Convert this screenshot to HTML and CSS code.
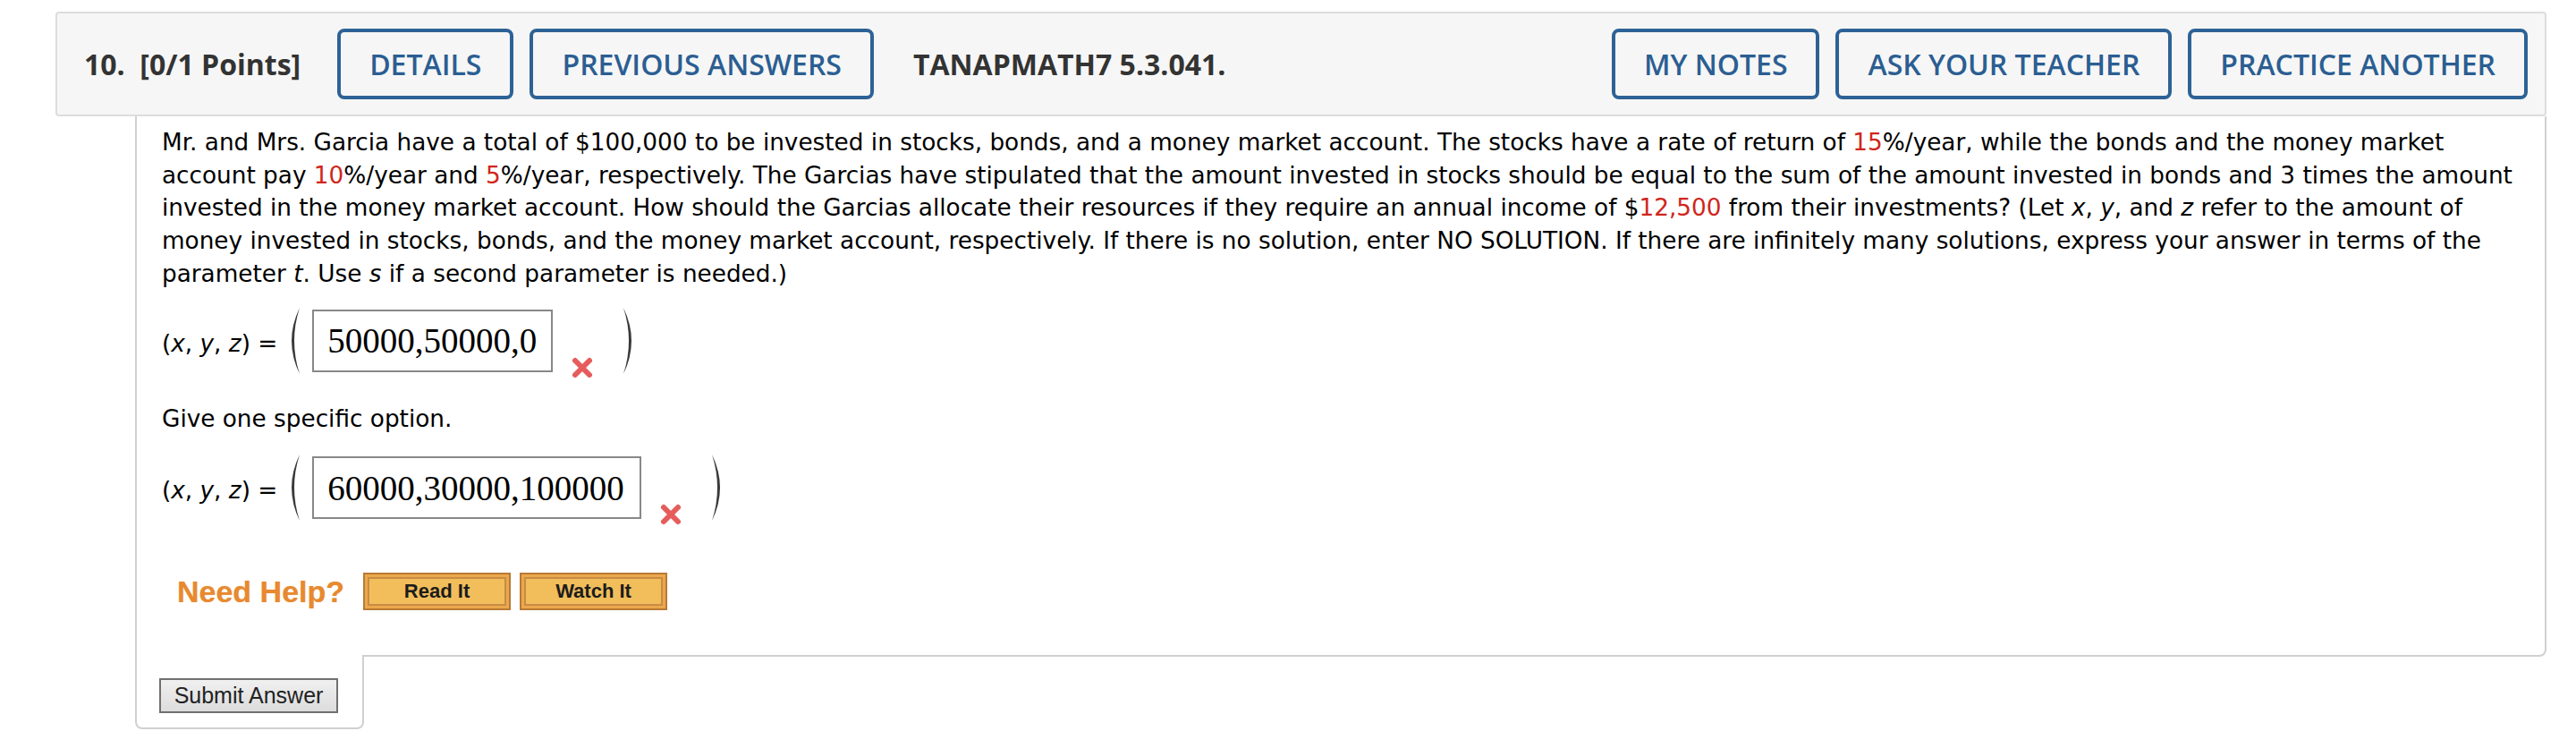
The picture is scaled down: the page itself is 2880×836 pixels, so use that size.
FILE: index.html
```html
<!DOCTYPE html>
<html lang="en">
<head>
<meta charset="utf-8">
<title>Question 10</title>
<link rel="stylesheet" href="styles.css">
</head>
<body>
<div class="question">
  <div class="qhead">
    <span class="qnum">10.&nbsp; [0/1 Points]</span>
    <button class="hbtn">DETAILS</button>
    <button class="hbtn">PREVIOUS ANSWERS</button>
    <span class="qcode">TANAPMATH7 5.3.041.</span>
    <div class="hright">
      <button class="hbtn">MY NOTES</button>
      <button class="hbtn">ASK YOUR TEACHER</button>
      <button class="hbtn">PRACTICE ANOTHER</button>
    </div>
  </div>
  <div class="qbody">
    <p class="prompt">Mr. and Mrs. Garcia have a total of $100,000 to be invested in stocks, bonds, and a money market account. The stocks have a rate of return of <span class="red">15</span>%/year, while the bonds and the money market account pay <span class="red">10</span>%/year and <span class="red">5</span>%/year, respectively. The Garcias have stipulated that the amount invested in stocks should be equal to the sum of the amount invested in bonds and 3 times the amount invested in the money market account. How should the Garcias allocate their resources if they require an annual income of $<span class="red">12,500</span> from their investments? (Let <i>x</i>, <i>y</i>, and <i>z</i> refer to the amount of money invested in stocks, bonds, and the money market account, respectively. If there is no solution, enter NO SOLUTION. If there are infinitely many solutions, express your answer in terms of the parameter <i>t</i>. Use <i>s</i> if a second parameter is needed.)</p>

    <div class="answer">
      <span class="label">(<i>x</i>, <i>y</i>, <i>z</i>) =</span>
      <svg class="paren" width="18" height="76" viewBox="0 0 18 76"><path d="M16 1 Q-2 38 16 75 Q4 38 16 1 Z" fill="#3a3a3a"/></svg>
      <span class="ansbox w1">50000,50000,0</span>
      <svg class="xmark" width="26" height="26" viewBox="0 0 26 26"><path d="M5 5 L21 21 M21 5 L5 21" stroke="#e65c5c" stroke-width="6" stroke-linecap="round"/></svg>
      <svg class="paren close" width="18" height="76" viewBox="0 0 18 76"><path d="M2 1 Q20 38 2 75 Q14 38 2 1 Z" fill="#3a3a3a"/></svg>
    </div>

    <p class="sub">Give one specific option.</p>

    <div class="answer second">
      <span class="label">(<i>x</i>, <i>y</i>, <i>z</i>) =</span>
      <svg class="paren" width="18" height="76" viewBox="0 0 18 76"><path d="M16 1 Q-2 38 16 75 Q4 38 16 1 Z" fill="#3a3a3a"/></svg>
      <span class="ansbox w2">60000,30000,100000</span>
      <svg class="xmark" width="26" height="26" viewBox="0 0 26 26"><path d="M5 5 L21 21 M21 5 L5 21" stroke="#e65c5c" stroke-width="6" stroke-linecap="round"/></svg>
      <svg class="paren close" width="18" height="76" viewBox="0 0 18 76"><path d="M2 1 Q20 38 2 75 Q14 38 2 1 Z" fill="#3a3a3a"/></svg>
    </div>

    <div class="help">
      <span class="needhelp">Need Help?</span>
      <button class="hlp">Read It</button>
      <button class="hlp">Watch It</button>
    </div>
  </div>
  <div class="qtab">
    <button class="submit">Submit Answer</button>
  </div>
</div>
</body>
</html>
```

FILE: styles.css
```css
html, body {
  margin: 0;
  padding: 0;
  background: #ffffff;
}

.question {
  margin-left: 62px;
  width: 2785px;
  padding-top: 13px;
}

.qhead {
  box-sizing: border-box;
  height: 117px;
  display: flex;
  align-items: center;
  background: #f6f6f6;
  border: 2px solid #dddddd;
  border-radius: 4px;
  padding: 0 19px 0 30px;
  font-family: "Open Sans", "Noto Sans", sans-serif;
}

.qnum {
  font-weight: 700;
  font-size: 32px;
  color: #333333;
  margin-right: 41px;
  white-space: nowrap;
}

.qcode {
  font-weight: 700;
  font-size: 32px;
  color: #333333;
  margin-left: 26px;
  white-space: nowrap;
}

.hbtn {
  box-sizing: border-box;
  height: 79px;
  padding: 0 32px;
  background: #f6f6f6;
  border: 4px solid #2d6296;
  border-radius: 8px;
  font-family: "Open Sans", "Noto Sans", sans-serif;
  font-weight: 600;
  font-size: 32px;
  color: #2b5e92;
  white-space: nowrap;
  margin-right: 18px;
}

.hright {
  margin-left: auto;
  display: flex;
}

.hright .hbtn:last-child {
  margin-right: 0;
}

.qbody {
  margin-left: 89px;
  border: 2px solid #d0d0d0;
  border-top: none;
  border-radius: 0 0 8px 0;
  padding: 11px 33px 50px 28px;
  font-family: "DejaVu Sans", Verdana, sans-serif;
  font-size: 26.3px;
  color: #000000;
}

.prompt {
  margin: 0;
  line-height: 36.7px;
}

.red {
  color: #d0261c;
}

.answer {
  display: flex;
  align-items: center;
  margin-top: 18px;
  height: 76px;
}

.answer.second {
  margin-top: 21px;
}

.label {
  padding-top: 6px;
  white-space: nowrap;
}

.paren {
  margin-left: 9px;
  flex: none;
}

.paren.close {
  margin-left: 31px;
}

.ansbox {
  box-sizing: border-box;
  height: 70px;
  margin-left: 12px;
  border: 2px solid #888888;
  padding: 0 15px;
  display: flex;
  align-items: center;
  font-family: "Liberation Serif", "Times New Roman", serif;
  font-size: 39px;
  color: #000000;
  background: #ffffff;
}

.w1 { width: 269px; }
.w2 { width: 368px; }

.xmark {
  flex: none;
  align-self: flex-start;
  margin-top: 55px;
  margin-left: 20px;
}

.sub {
  margin: 31px 0 0 0;
  line-height: 36.7px;
}

.help {
  display: flex;
  align-items: center;
  margin-top: 57px;
  padding-left: 17px;
}

.needhelp {
  font-family: "Liberation Sans", Arial, sans-serif;
  font-weight: 700;
  font-size: 34px;
  color: #e8892f;
  margin-right: 21px;
  text-shadow: 0 0 1px rgba(232, 137, 47, 0.5);
}

.hlp {
  box-sizing: border-box;
  width: 165px;
  height: 42px;
  margin-right: 10px;
  padding: 0;
  background: #f2be5b;
  border: 2px solid #b97a35;
  box-shadow: inset 0 0 0 3px #eba84c, inset 0 0 0 5px #c98b45;
  font-family: "Liberation Sans", Arial, sans-serif;
  font-weight: 700;
  font-size: 22px;
  color: #1c1c1c;
}

.qtab {
  position: relative;
  box-sizing: border-box;
  width: 256px;
  margin-left: 89px;
  margin-top: -2px;
  background: #ffffff;
  border: 2px solid #d0d0d0;
  border-top: none;
  border-radius: 0 0 8px 8px;
  padding: 26px 0 16px 25px;
}

.submit {
  box-sizing: border-box;
  width: 200px;
  height: 39px;
  padding: 0;
  border: 2px solid #707070;
  background: linear-gradient(#f0f0f0, #dcdcdc);
  font-family: "Liberation Sans", Arial, sans-serif;
  font-size: 25px;
  color: #222222;
  display: block;
}
```
